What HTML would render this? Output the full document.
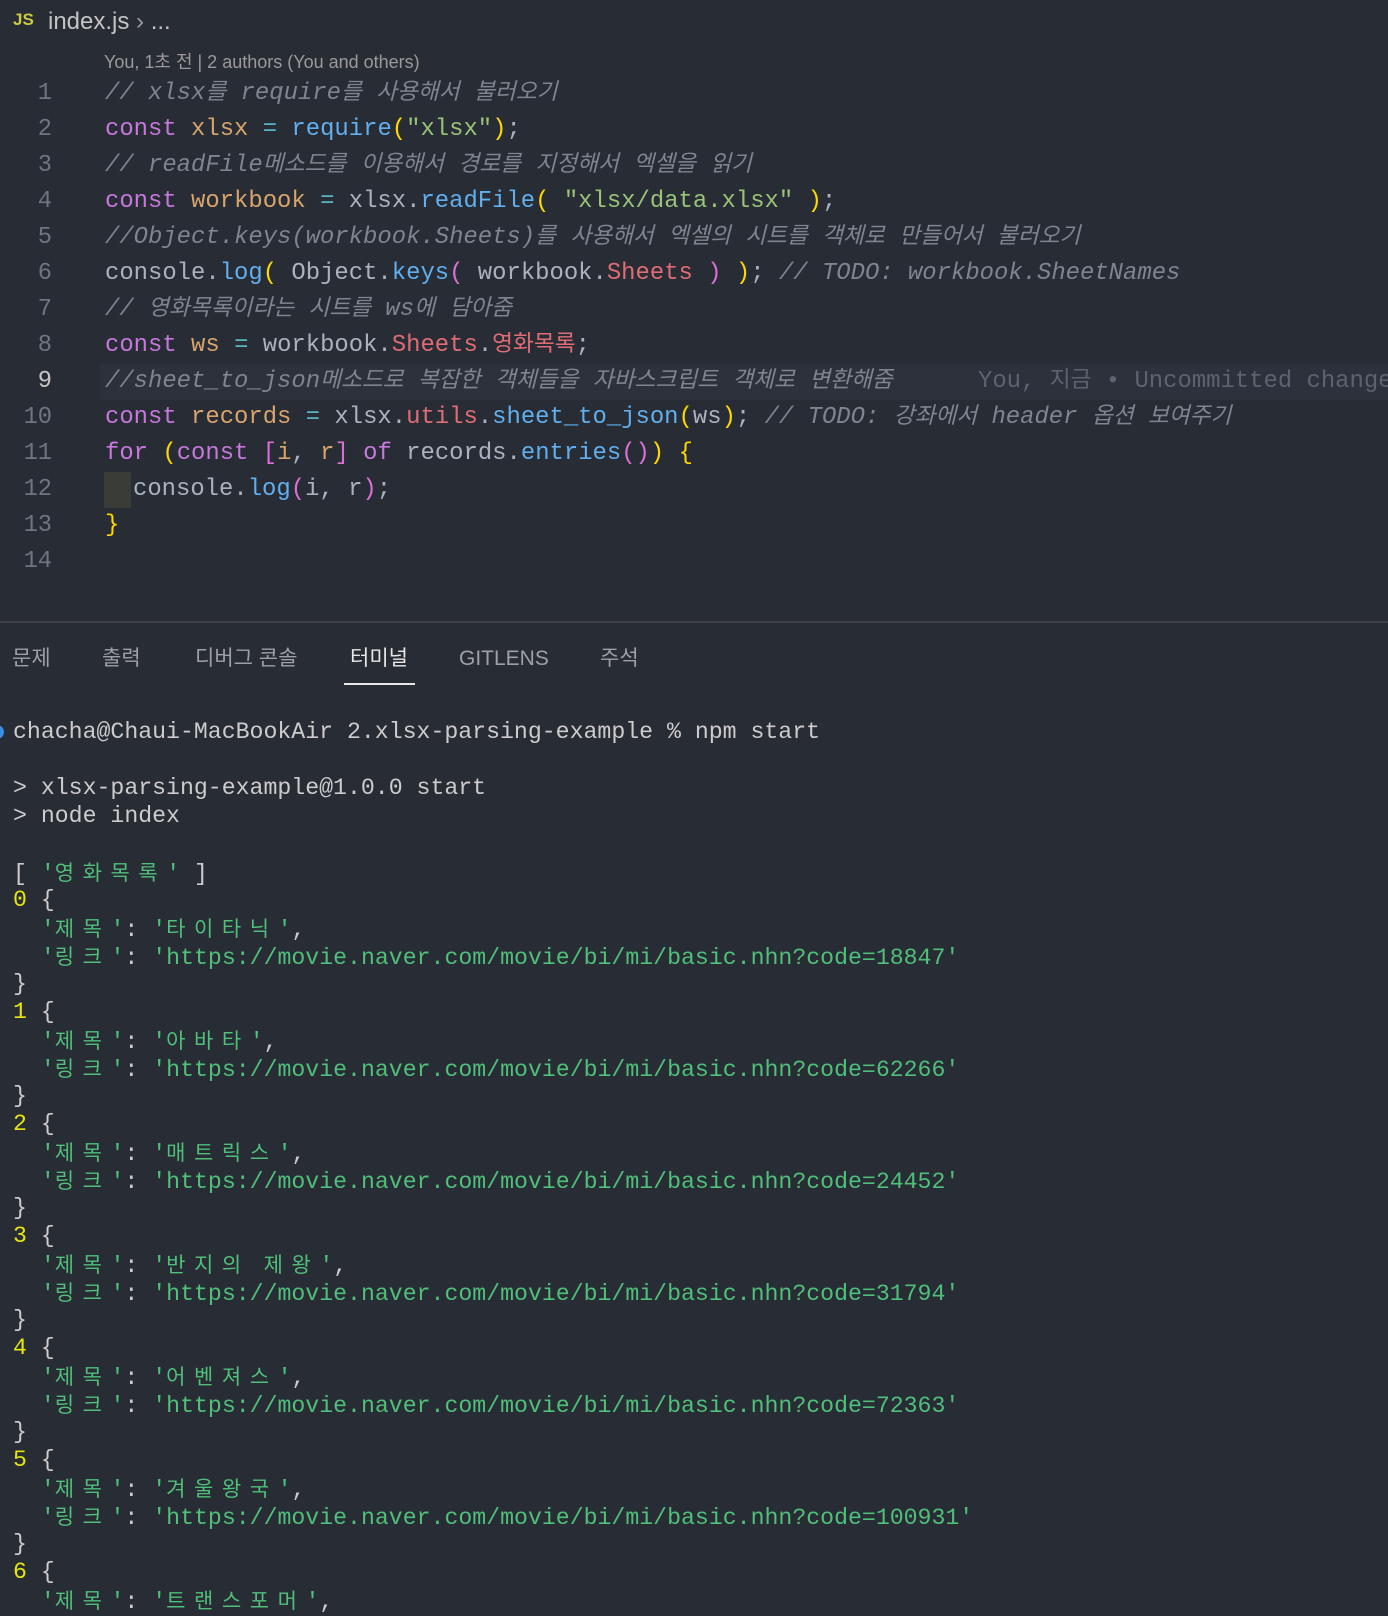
<!DOCTYPE html>
<html><head><meta charset="utf-8"><style>
body{margin:0;width:1388px;height:1596px;background:#282c34;overflow:hidden;position:relative;font-family:"Liberation Mono","Noto Sans CJK KR",monospace;}
.a{position:absolute;white-space:pre;}
.code{left:105px;height:36px;line-height:36px;font-size:23.9px;color:#abb2bf;}
.ln{left:0;width:52px;text-align:right;height:36px;line-height:36px;font-size:23.7px;color:#6e7681;font-family:"Liberation Mono",monospace;}
.k{font-family:"Noto Sans CJK KR",sans-serif;font-size:22.7px;line-height:20px;}
.c{color:#7f848e;font-style:italic}
.kw{color:#c678dd}.v{color:#d8a46c}.f{color:#61afef}.s{color:#98c379}.p{color:#e06c75}.o{color:#56b6c2}
.y{color:#ffd700}.m{color:#da70d6}.b{color:#179fff}
.t{left:13px;height:28px;line-height:28px;font-size:23.2px;color:#cccccc;}
.t i{font-style:normal;display:inline-block;width:27.86px;font-size:21px;font-family:"Noto Sans CJK KR",sans-serif;line-height:28px}
.g{color:#4fbf7a}.n{color:#e5e510}
.tab{position:absolute;top:646px;font-family:"Liberation Sans","Noto Sans CJK KR",sans-serif;font-size:21px;color:#9da0a6;line-height:26px}
</style></head><body>
<div class="a" style="left:13px;top:10px;font-family:'Liberation Sans',sans-serif;font-weight:bold;font-size:17px;color:#cbcb41">JS</div>
<div class="a" style="left:48px;top:8px;font-family:'Liberation Sans',sans-serif;font-size:24px;color:#c4c4c4">index.js <span style="color:#9a9a9a">›</span> ...</div>
<div class="a" style="left:104px;top:48px;font-family:'Liberation Sans','Noto Sans CJK KR',sans-serif;font-size:18px;color:#9a9a9a">You, 1초 전 | 2 authors (You and others)</div>

<div class="a" style="left:100px;top:363.6px;width:1288px;height:36px;background:#2c313b"></div>
<div class="a" style="left:104px;top:472px;width:27px;height:36px;background:#3a3c37"></div>

<div class="a ln" style="top:75.6px">1</div>
<div class="a ln" style="top:111.6px">2</div>
<div class="a ln" style="top:147.6px">3</div>
<div class="a ln" style="top:183.6px">4</div>
<div class="a ln" style="top:219.6px">5</div>
<div class="a ln" style="top:255.6px">6</div>
<div class="a ln" style="top:291.6px">7</div>
<div class="a ln" style="top:327.6px">8</div>
<div class="a ln" style="top:363.6px;color:#c6c6c6">9</div>
<div class="a ln" style="top:399.6px">10</div>
<div class="a ln" style="top:435.6px">11</div>
<div class="a ln" style="top:471.6px">12</div>
<div class="a ln" style="top:507.6px">13</div>
<div class="a ln" style="top:543.6px">14</div>

<div class="a code c" style="top:75.6px">// xlsx<span class="k">를</span> require<span class="k">를</span> <span class="k">사용해서</span> <span class="k">불러오기</span></div>
<div class="a code" style="top:111.6px"><span class="kw">const</span> <span class="v">xlsx</span> <span class="o">=</span> <span class="f">require</span><span class="y">(</span><span class="s">"xlsx"</span><span class="y">)</span>;</div>
<div class="a code c" style="top:147.6px">// readFile<span class="k">메소드를</span> <span class="k">이용해서</span> <span class="k">경로를</span> <span class="k">지정해서</span> <span class="k">엑셀을</span> <span class="k">읽기</span></div>
<div class="a code" style="top:183.6px"><span class="kw">const</span> <span class="v">workbook</span> <span class="o">=</span> xlsx.<span class="f">readFile</span><span class="y">(</span> <span class="s">"xlsx/data.xlsx"</span> <span class="y">)</span>;</div>
<div class="a code c" style="top:219.6px">//Object.keys(workbook.Sheets)<span class="k">를</span> <span class="k">사용해서</span> <span class="k">엑셀의</span> <span class="k">시트를</span> <span class="k">객체로</span> <span class="k">만들어서</span> <span class="k">불러오기</span></div>
<div class="a code" style="top:255.6px">console.<span class="f">log</span><span class="y">(</span> Object.<span class="f">keys</span><span class="m">(</span> workbook.<span class="p">Sheets</span> <span class="m">)</span> <span class="y">)</span>; <span class="c">// TODO: workbook.SheetNames</span></div>
<div class="a code c" style="top:291.6px">// <span class="k">영화목록이라는</span> <span class="k">시트를</span> ws<span class="k">에</span> <span class="k">담아줌</span></div>
<div class="a code" style="top:327.6px"><span class="kw">const</span> <span class="v">ws</span> <span class="o">=</span> workbook.<span class="p">Sheets</span>.<span class="p k">영화목록</span>;</div>
<div class="a code" style="top:363.6px"><span class="c">//sheet_to_json<span class="k">메소드로</span> <span class="k">복잡한</span> <span class="k">객체들을</span> <span class="k">자바스크립트</span> <span class="k">객체로</span> <span class="k">변환해줌</span></span></div>
<div class="a code" style="top:363.6px;left:978px;color:#5c6370">You, <span class="k">지금</span> • Uncommitted changes</div>
<div class="a code" style="top:399.6px"><span class="kw">const</span> <span class="v">records</span> <span class="o">=</span> xlsx.<span class="p">utils</span>.<span class="f">sheet_to_json</span><span class="y">(</span>ws<span class="y">)</span>; <span class="c">// TODO: <span class="k">강좌에서</span> header <span class="k">옵션</span> <span class="k">보여주기</span></span></div>
<div class="a code" style="top:435.6px"><span class="kw">for</span> <span class="y">(</span><span class="kw">const</span> <span class="m">[</span><span class="v">i</span>, <span class="v">r</span><span class="m">]</span> <span class="kw">of</span> records.<span class="f">entries</span><span class="m">()</span><span class="y">)</span> <span class="y">{</span></div>
<div class="a code" style="top:471.6px;left:133px">console.<span class="f">log</span><span class="m">(</span>i, r<span class="m">)</span>;</div>
<div class="a code" style="top:507.6px"><span class="y">}</span></div>

<div class="a" style="left:0;top:621px;width:1388px;height:2px;background:#3e4148"></div>
<div class="tab" style="left:12px">문제</div>
<div class="tab" style="left:102px">출력</div>
<div class="tab" style="left:195px">디버그 콘솔</div>
<div class="tab" style="left:350px;color:#e7e7e7">터미널</div>
<div class="tab" style="left:459px">GITLENS</div>
<div class="tab" style="left:600px">주석</div>
<div class="a" style="left:344px;top:683px;width:71px;height:2px;background:#e7e7e7"></div>

<div class="a" style="left:-5px;top:726px;width:9px;height:12px;border-radius:50%;background:#3a8ee6"></div>
<div class="a t" style="top:718px">chacha@Chaui-MacBookAir 2.xlsx-parsing-example % npm start</div>
<div class="a t" style="top:774px">&gt; xlsx-parsing-example@1.0.0 start</div>
<div class="a t" style="top:802px">&gt; node index</div>
<div class="a t" style="top:858px">[ <span class="g">'<i>영</i><i>화</i><i>목</i><i>록</i>'</span> ]</div>

<div class="a t" style="top:886px"><span class="n">0</span> {</div>
<div class="a t" style="top:914px">  <span class="g">'<i>제</i><i>목</i>'</span>: <span class="g">'<i>타</i><i>이</i><i>타</i><i>닉</i>'</span>,</div>
<div class="a t" style="top:942px">  <span class="g">'<i>링</i><i>크</i>'</span>: <span class="g">'https://movie.naver.com/movie/bi/mi/basic.nhn?code=18847'</span></div>
<div class="a t" style="top:970px">}</div>

<div class="a t" style="top:998px"><span class="n">1</span> {</div>
<div class="a t" style="top:1026px">  <span class="g">'<i>제</i><i>목</i>'</span>: <span class="g">'<i>아</i><i>바</i><i>타</i>'</span>,</div>
<div class="a t" style="top:1054px">  <span class="g">'<i>링</i><i>크</i>'</span>: <span class="g">'https://movie.naver.com/movie/bi/mi/basic.nhn?code=62266'</span></div>
<div class="a t" style="top:1082px">}</div>

<div class="a t" style="top:1110px"><span class="n">2</span> {</div>
<div class="a t" style="top:1138px">  <span class="g">'<i>제</i><i>목</i>'</span>: <span class="g">'<i>매</i><i>트</i><i>릭</i><i>스</i>'</span>,</div>
<div class="a t" style="top:1166px">  <span class="g">'<i>링</i><i>크</i>'</span>: <span class="g">'https://movie.naver.com/movie/bi/mi/basic.nhn?code=24452'</span></div>
<div class="a t" style="top:1194px">}</div>

<div class="a t" style="top:1222px"><span class="n">3</span> {</div>
<div class="a t" style="top:1250px">  <span class="g">'<i>제</i><i>목</i>'</span>: <span class="g">'<i>반</i><i>지</i><i>의</i> <i>제</i><i>왕</i>'</span>,</div>
<div class="a t" style="top:1278px">  <span class="g">'<i>링</i><i>크</i>'</span>: <span class="g">'https://movie.naver.com/movie/bi/mi/basic.nhn?code=31794'</span></div>
<div class="a t" style="top:1306px">}</div>

<div class="a t" style="top:1334px"><span class="n">4</span> {</div>
<div class="a t" style="top:1362px">  <span class="g">'<i>제</i><i>목</i>'</span>: <span class="g">'<i>어</i><i>벤</i><i>져</i><i>스</i>'</span>,</div>
<div class="a t" style="top:1390px">  <span class="g">'<i>링</i><i>크</i>'</span>: <span class="g">'https://movie.naver.com/movie/bi/mi/basic.nhn?code=72363'</span></div>
<div class="a t" style="top:1418px">}</div>

<div class="a t" style="top:1446px"><span class="n">5</span> {</div>
<div class="a t" style="top:1474px">  <span class="g">'<i>제</i><i>목</i>'</span>: <span class="g">'<i>겨</i><i>울</i><i>왕</i><i>국</i>'</span>,</div>
<div class="a t" style="top:1502px">  <span class="g">'<i>링</i><i>크</i>'</span>: <span class="g">'https://movie.naver.com/movie/bi/mi/basic.nhn?code=100931'</span></div>
<div class="a t" style="top:1530px">}</div>
<div class="a t" style="top:1558px"><span class="n">6</span> {</div>
<div class="a t" style="top:1586px">  <span class="g">'<i>제</i><i>목</i>'</span>: <span class="g">'<i>트</i><i>랜</i><i>스</i><i>포</i><i>머</i>'</span>,</div>
</body></html>
